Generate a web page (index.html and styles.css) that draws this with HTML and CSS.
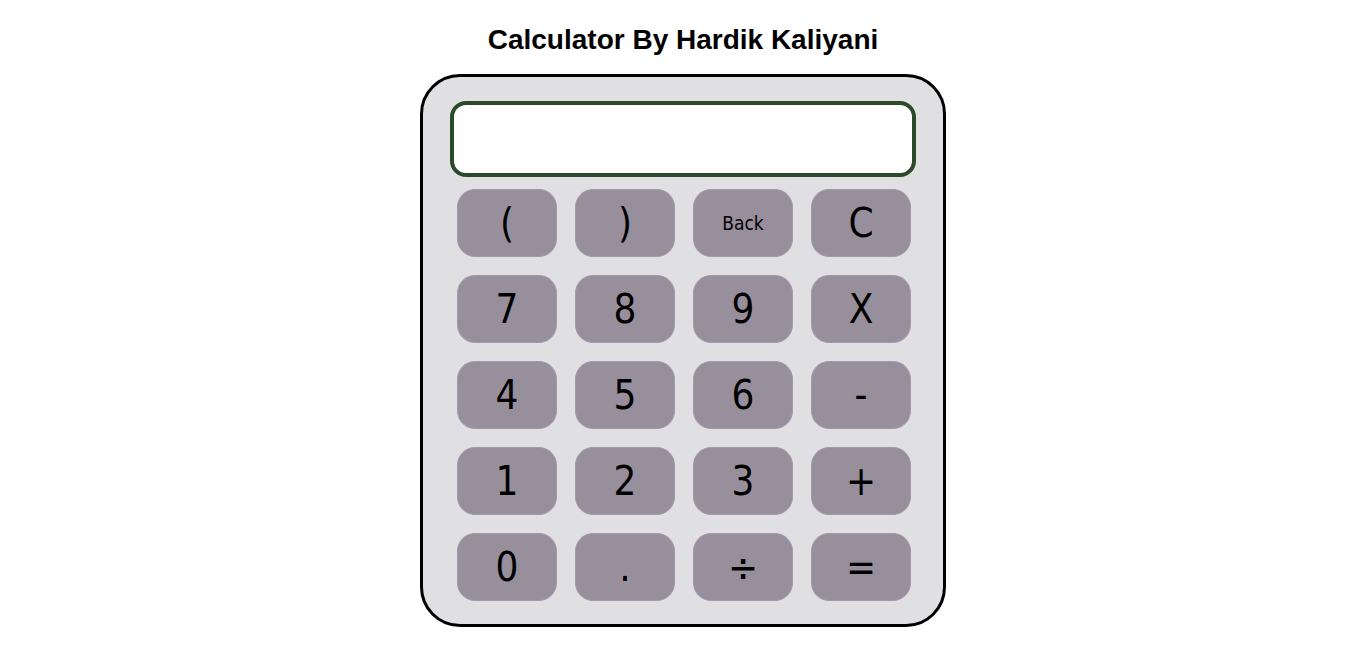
FILE: index.html
```html
<!DOCTYPE html>
<html>
<head>
<meta charset="utf-8">
<title>Calculator</title>
<link rel="stylesheet" href="styles.css">
</head>
<body>
<div class="page">
  <h1 class="title">Calculator By Hardik Kaliyani</h1>
  <div class="calc">
    <div class="display"></div>
    <div class="keys">
      <button class="key">(</button>
      <button class="key">)</button>
      <button class="key key-small">Back</button>
      <button class="key">C</button>
      <button class="key">7</button>
      <button class="key">8</button>
      <button class="key">9</button>
      <button class="key">X</button>
      <button class="key">4</button>
      <button class="key">5</button>
      <button class="key">6</button>
      <button class="key">-</button>
      <button class="key">1</button>
      <button class="key">2</button>
      <button class="key">3</button>
      <button class="key">+</button>
      <button class="key">0</button>
      <button class="key">.</button>
      <button class="key">÷</button>
      <button class="key">=</button>
    </div>
  </div>
</div>
</body>
</html>
```

FILE: styles.css
```css
html, body {
  margin: 0;
  padding: 0;
  background: #ffffff;
}

.page {
  display: flex;
  flex-direction: column;
  align-items: center;
}

.title {
  font-family: "Liberation Sans", Arial, sans-serif;
  font-weight: bold;
  font-size: 28px;
  line-height: 30px;
  margin: 25px 0 19px 0;
  color: #000;
}

.calc {
  width: 526px;
  height: 553px;
  box-sizing: border-box;
  border: 3px solid #000;
  border-radius: 40px;
  background: #e0dfe2;
  padding: 24px 0 0 0;
  display: flex;
  flex-direction: column;
}

.display {
  margin: 0 27px 0 27px;
  height: 76px;
  box-sizing: border-box;
  border: 4px solid #2a4a2a;
  border-radius: 16px;
  background: #ffffff;
}

.keys {
  margin-top: 12px;
  padding-left: 34px;
  display: grid;
  grid-template-columns: repeat(4, 100px);
  grid-auto-rows: 68px;
  gap: 18px;
}

.key {
  box-sizing: border-box;
  border: 1px solid #a19ca5;
  border-radius: 18px;
  background: #988f9d;
  color: #000;
  font-family: "DejaVu Sans Condensed", "DejaVu Sans", sans-serif;
  font-size: 40px;
  padding: 0;
  margin: 0;
  display: flex;
  align-items: center;
  justify-content: center;
}

.key-small {
  font-size: 19px;
}
```
